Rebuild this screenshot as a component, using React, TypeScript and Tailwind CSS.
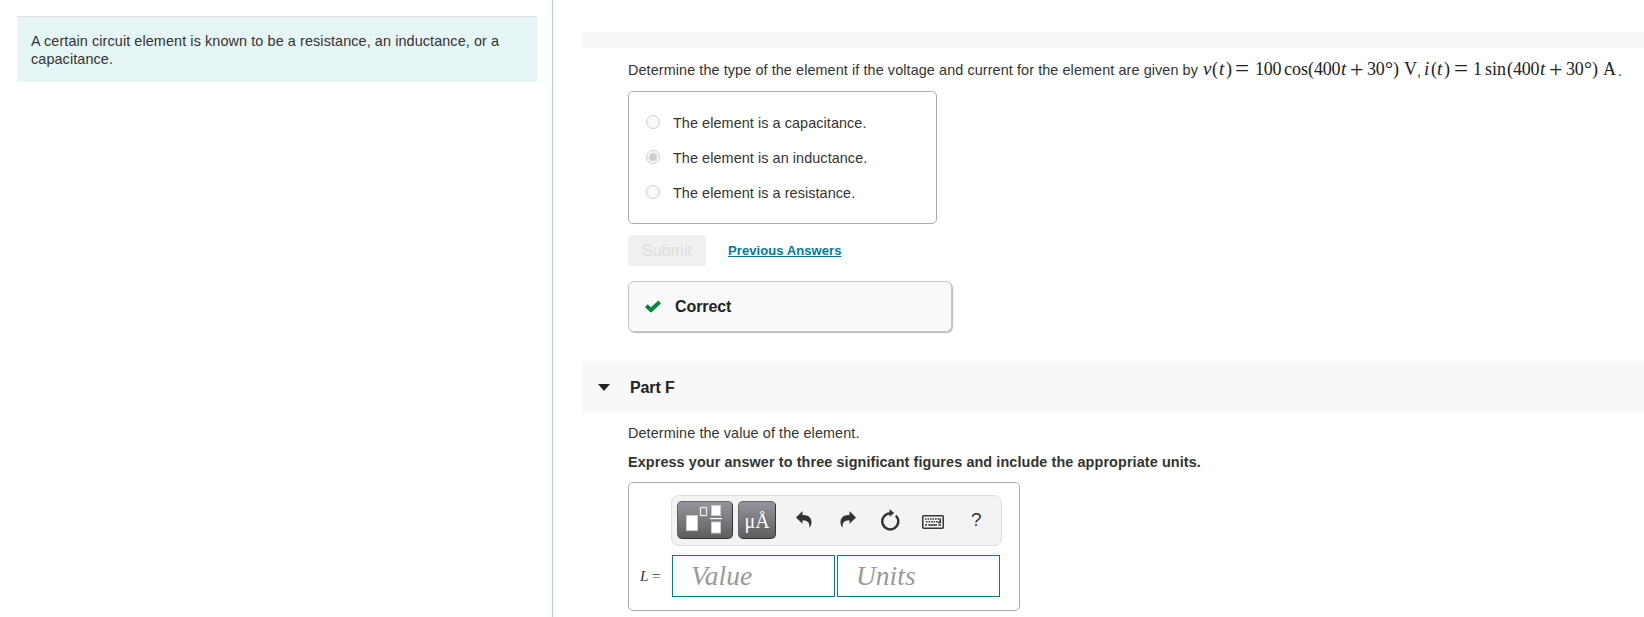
import React from "react";

const choices = [
    { label: "The element is a capacitance.", checked: false },
    { label: "The element is an inductance.", checked: true },
    { label: "The element is a resistance.", checked: false },
];

function Radio({ checked }: { checked: boolean }) {
    return (
        <span className="mb-[2px] flex h-[14px] w-[14px] items-center justify-center rounded-full border border-[#cfcfcf] bg-[#f8f8f8]">
            {checked && <span className="h-2 w-2 rounded-full bg-[#cfcfcf]" />}
        </span>
    );
}

/* Each token sits in its own cell so the formula keeps TeX-like spacing */
function Formula() {
    return (
        <span className="flex font-['Liberation_Serif',serif] text-[18px] leading-[24px] text-[#222]">
            <span className="w-[9px] text-[19px] italic">v</span>
            <span className="w-[7px]">(</span>
            <span className="w-[7px] text-[19px] italic">t</span>
            <span className="w-[9px]">)</span>
            <span className="w-[20px] text-[25px]">=</span>
            <span className="w-[29px] tracking-[-0.3px]">100</span>
            <span className="w-[24px]">cos</span>
            <span className="w-[6px]">(</span>
            <span className="w-[27px] tracking-[-0.3px]">400</span>
            <span className="w-[9px] text-[19px] italic">t</span>
            <span className="w-[17px] text-[24px]">+</span>
            <span className="w-[18px] tracking-[-0.3px]">30</span>
            <span className="w-[8px] text-[20px]">°</span>
            <span className="w-[11px]">)</span>
            <span className="w-[13px]">V</span>
            <span className="w-[7px] font-['Liberation_Sans',sans-serif] text-[14px] leading-[28px]">,</span>
            <span className="w-[7px] text-[19px] italic">i</span>
            <span className="w-[6px]">(</span>
            <span className="w-[7px] text-[19px] italic">t</span>
            <span className="w-[10px]">)</span>
            <span className="w-[19px] text-[25px]">=</span>
            <span className="w-[12px]">1</span>
            <span className="w-[22px]">sin</span>
            <span className="w-[6px]">(</span>
            <span className="w-[27px] tracking-[-0.3px]">400</span>
            <span className="w-[9px] text-[19px] italic">t</span>
            <span className="w-[17px] text-[24px]">+</span>
            <span className="w-[18px] tracking-[-0.3px]">30</span>
            <span className="w-[8px] text-[20px]">°</span>
            <span className="w-[11px]">)</span>
            <span className="w-[15px]">A</span>
            <span className="font-['Liberation_Sans',sans-serif] text-[14px] leading-[28px]">.</span>
        </span>
    );
}

function TemplateIcon() {
    return (
        <svg width="36" height="30" viewBox="0 0 36 30" fill="#fff" className="mr-[3px] mb-[2px]">
            <rect x="0.5" y="11.5" width="11" height="15" stroke="#ccc" />
            <rect x="14.5" y="3.5" width="6" height="8" fill="none" stroke="#e8e8e8" strokeWidth="1.3" />
            <rect x="25.5" y="1.5" width="9" height="10" stroke="#ccc" />
            <rect x="24" y="14" width="12" height="1.2" />
            <rect x="25.5" y="18" width="9" height="11" stroke="#ccc" />
        </svg>
    );
}

function UndoIcon({ flip = false }: { flip?: boolean }) {
    return (
        <svg width="16" height="17" viewBox="0 0 16 17" className={flip ? "-scale-x-100" : ""} fill="#333">
            <path d="M0 6.5 L6.5 0 V4 C12 3.6 15.5 6.5 15.5 11 C15.5 13.2 15 15 13.2 16.8 C14 12 12 9.3 6.5 9.2 V12.8 Z" />
        </svg>
    );
}

function ResetIcon() {
    return (
        <svg width="20" height="22" viewBox="0 0 20 22">
            <path d="M15.8 6.6 A8 8 0 1 1 10 4.4" fill="none" stroke="#333" strokeWidth="2.4" />
            <path d="M9.5 0.2 L14.3 4 L9.5 7.8 Z" fill="#333" />
        </svg>
    );
}

function KeyboardIcon() {
    return (
        <svg width="22" height="14" viewBox="0 0 22 14">
            <rect x="0.75" y="0.75" width="20.5" height="12.5" rx="1" fill="#f8f8f8" stroke="#333" strokeWidth="1.5" />
            <path d="M3 4H17M4 6.7H16" stroke="#333" strokeWidth="1.6" strokeDasharray="1.6 0.9" />
            <path d="M3 10H5M6.3 10H15M16.3 10H19M18.3 3.2V7.5H16" fill="none" stroke="#333" strokeWidth="1.6" />
        </svg>
    );
}

function AnswerEditor() {
    return (
        <div className="mt-[11px] h-[129px] w-[392px] rounded-[5px] border border-[#aaa] pt-3">
            <div className="ml-[42px] flex h-[51px] w-[331px] items-center rounded-lg border border-[#ddd] bg-[#f3f3f3] pb-px pl-[5px]">
                <button className="flex h-[38px] w-[56px] items-center justify-center rounded-[5px] border border-[#333] border-t-[#666] border-l-[#666] bg-linear-to-b from-[#96959f] to-[#5e5e5e]">
                    <TemplateIcon />
                </button>
                <button className="ml-[5px] h-[38px] w-[38px] rounded-[5px] border border-[#333] border-t-[#666] border-l-[#666] bg-linear-to-b from-[#96959f] to-[#5e5e5e] font-['Liberation_Serif',serif] text-[20px] leading-[38px] text-white">
                    μÅ
                </button>
                <span className="mb-[2px] ml-5 w-[44px]"><UndoIcon /></span>
                <span className="mb-[2px] w-[40px]"><UndoIcon flip /></span>
                <span className="w-[42px]"><ResetIcon /></span>
                <span className="w-[49px] pt-[3px]"><KeyboardIcon /></span>
                <span className="w-[10px] font-['Liberation_Sans',sans-serif] text-[19px] text-[#333]">?</span>
            </div>
            <div className="mt-[9px] flex items-center">
                <span className="w-[43px] pl-[11px] font-['Liberation_Serif',serif] text-[15px]">
                    <i>L</i> =
                </span>
                <div className="h-[42px] w-[163px] border border-[#007a9c] pl-[18px] font-['Liberation_Serif',serif] text-[27.5px] leading-[40px] text-[#999] italic">
                    Value
                </div>
                <div className="ml-[2px] h-[42px] w-[163px] border border-[#007a9c] pl-[18px] font-['Liberation_Serif',serif] text-[27.5px] leading-[40px] text-[#999] italic">
                    Units
                </div>
            </div>
        </div>
    );
}

export default function App() {
    return (
        <div className="flex h-[617px] w-[1644px] overflow-hidden bg-white font-['Liberation_Sans',Arial,sans-serif] text-[#333]">
            {/* Problem statement */}
            <aside className="w-[553px] shrink-0 border-r border-[#b5cbdc] pt-4 pl-[17px]">
                <p className="h-[66px] w-[520px] border-t border-[#d9dede] bg-[#e6f5f6] pt-[15px] pl-[14px] text-[14.4px] leading-[18px] tracking-[0.1px]">
                    A certain circuit element is known to be a resistance, an inductance, or a<br />
                    capacitance.
                </p>
            </aside>

            <main className="ml-[29px] flex-1 pt-8">
                <div className="h-4 bg-[#f8f8f8]" />
                <section className="h-[313px] pl-[46px]">
                    <div className="flex h-[43px] pt-[9px] whitespace-nowrap">
                        <p className="w-[575px] text-[14.4px] leading-[26px] tracking-[0.095px]">
                            Determine the type of the element if the voltage and current for the element are given by
                        </p>
                        <Formula />
                    </div>
                    <div className="flex h-[133px] w-[309px] flex-col rounded-[5px] border border-[#aaa] pt-[13px] pl-[17px]">
                        {choices.map((c) => (
                            <label key={c.label} className="flex h-[35px] items-center gap-[13px] text-[14.4px] tracking-[0.08px]">
                                <Radio checked={c.checked} />
                                <span className="pt-[2px]">{c.label}</span>
                            </label>
                        ))}
                    </div>
                    <div className="mt-[11px] flex h-[31px] items-center">
                        <button className="h-[31px] w-[78px] rounded-[2px] bg-[#f0f0f0] text-[16px] text-[#ddd]">Submit</button>
                        <a className="ml-[22px] text-[13px] font-bold tracking-[0.08px] text-[#007a9c] underline">Previous Answers</a>
                    </div>
                    <div className="mt-[15px] flex h-[51px] w-[324px] items-center rounded-[6px] border border-[#c4c4c4] bg-[#f9f9f9] pl-4 shadow-[1px_1px_1px_#bbb]">
                        <svg width="16" height="13" viewBox="0 0 16 13">
                            <path d="M1.3 5.8 L6 10 L14.7 2" fill="none" stroke="#008638" strokeWidth="4" />
                        </svg>
                        <span className="ml-[14px] text-[16px] font-bold tracking-[-0.1px] text-[#222]">Correct</span>
                    </div>
                </section>

                <header className="flex h-[52px] items-center bg-[#f8f8f8] pl-4">
                    <svg width="12" height="7" viewBox="0 0 12 7">
                        <path d="M0 0H12L6 7Z" fill="#222" />
                    </svg>
                    <h2 className="ml-5 pt-[2px] text-[16px] font-bold tracking-[-0.1px] text-[#222]">Part F</h2>
                </header>
                <section className="pt-[11px] pl-[46px]">
                    <p className="text-[14.4px] leading-[18px] tracking-[0.1px]">Determine the value of the element.</p>
                    <p className="mt-[11px] text-[14.4px] leading-[18px] font-bold tracking-[0.1px]">
                        Express your answer to three significant figures and include the appropriate units.
                    </p>
                    <AnswerEditor />
                </section>
            </main>
        </div>
    );
}
